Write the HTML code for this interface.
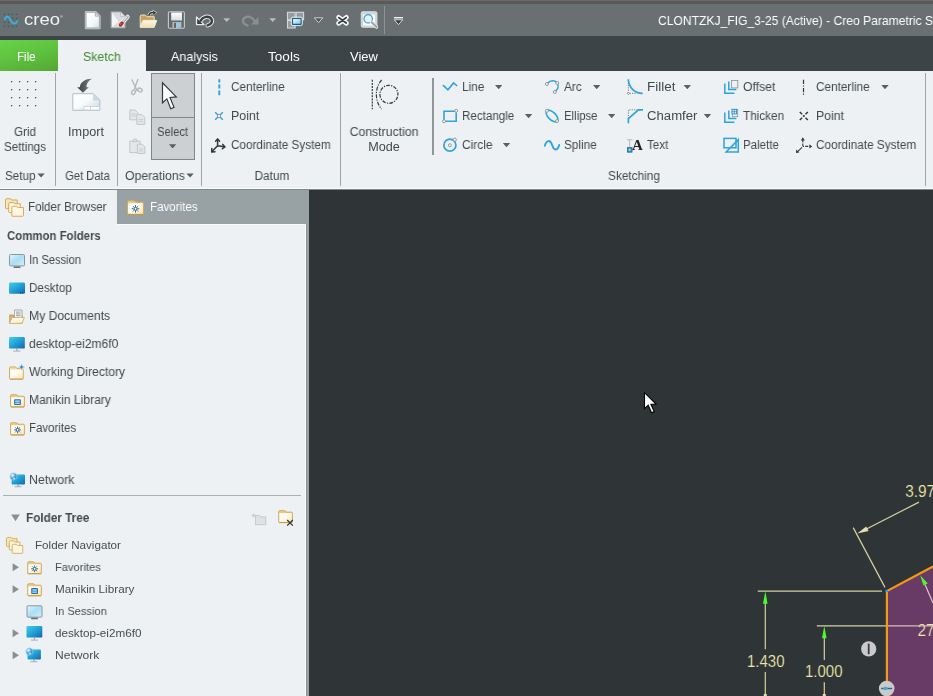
<!DOCTYPE html>
<html>
<head>
<meta charset="utf-8">
<title>Creo Parametric</title>
<style>
html,body{margin:0;padding:0;}
body{width:933px;height:696px;overflow:hidden;position:relative;background:#2f3637;font-family:"Liberation Sans",sans-serif;font-size:12px;color:#43494c;}
.abs{position:absolute;}
.t{position:absolute;white-space:nowrap;line-height:16px;height:16px;font-size:12.5px;transform:scaleX(.93);transform-origin:0 50%;will-change:transform;}
#topstrip{left:0;top:0;width:933px;height:4px;background:#5a5a5a;}
#topline{left:0;top:0;width:933px;height:1px;background:#6d6a69;}
#titlebar{left:0;top:4px;width:933px;height:32px;background:#687072;}
#tabbar{left:0;top:36px;width:933px;height:35px;background:#3c4447;}
#filetab{left:0;top:40px;width:58px;height:31px;background:linear-gradient(165deg,#68d248 0%,#5fc340 45%,#53a833 100%);}
#sketchtab{left:58px;top:40px;width:88px;height:31px;background:#edf1f3;}
#ribbon{left:0;top:71px;width:933px;height:117px;background:#edf1f3;}
#ribbonline{left:0;top:188px;width:933px;height:2px;background:linear-gradient(#f8f9fa 0,#f8f9fa 50%,#7f8789 50%,#7f8789 100%);}
#leftpanel{left:0;top:190px;width:306px;height:506px;background:#edf1f3;}
#favtab{left:117px;top:190px;width:192px;height:34px;background:#98a1a3;}
#divider{left:306px;top:224px;width:3px;height:472px;background:#98a1a3;}
#canvas{left:309px;top:190px;width:624px;height:506px;background:#2f3536;}
.tab{font-size:12.900px;color:#fff;top:48.700px;}
.vsep{position:absolute;width:1px;background:#9fa6a8;}
.rl{top:79px;}
.r2{top:108px;}
.r3{top:137px;}
.gl{top:168px;}
.c{text-align:center;transform-origin:50% 50%;}
.dd{position:absolute;width:7.400px;height:4.200px;background:#5a5f61;clip-path:polygon(0 0,100% 0,50% 100%);}
.item{left:29px;}
.tree{left:55px;font-size:11.600px;color:#474d50;margin-top:.3px;}
.hline{position:absolute;height:1px;background:#a9b0b2;}
</style>
</head>
<body>
<div id="topstrip" class="abs"></div>
<div id="topline" class="abs"></div>
<div id="titlebar" class="abs"></div>
<div id="tabbar" class="abs"></div>
<div id="filetab" class="abs"></div>
<div id="sketchtab" class="abs"></div>
<div id="ribbon" class="abs"></div>
<div id="ribbonline" class="abs"></div>
<div id="leftpanel" class="abs"></div>
<div id="favtab" class="abs"></div>
<div id="divider" class="abs"></div>
<div class="abs" style="left:117px;top:224px;width:189px;height:1px;background:#f9fbfb;"></div>
<div class="abs" style="left:305px;top:224px;width:1px;height:472px;background:#f6f8f9;"></div>
<div class="abs" style="left:306px;top:224px;width:1px;height:472px;background:#8e9799;"></div>
<div id="canvas" class="abs"></div>



<!-- canvas drawing -->
<svg class="abs" style="left:309px;top:190px;" width="624" height="506" viewBox="309 190 624 506">
<!-- polygon fill -->
<path d="M886.900 591.100 L933 566.400 L933 696 L886.900 696 Z" fill="#683a66"/>
<!-- witness/dimension lines -->
<g stroke="#d6d0a0" stroke-width="1.200" fill="none">
<path d="M757.700 591.200 H882"/>
<path d="M765.300 603 V649.300 M765.300 672 V696"/>
<path d="M816.800 625.800 H887"/>
<path d="M824.300 637 V660 M824.300 682.300 V696"/>
<path d="M853.200 527.600 L885 587.400"/>
<path d="M919 502.100 L866 529.200"/>
</g>
<path d="M887 625.800 H933" stroke="#d9b9c0" stroke-width="1.200"/>
<path d="M925 584.500 L933 603" stroke="#e0c8c0" stroke-width="1.200"/>
<!-- pale arrowhead -->
<path d="M857.300 533.600 L866.200 526.400 L868.600 531 Z" fill="#e6e0b0"/>
<!-- bottom arrow tips -->
<rect x="763.800" y="694" width="3" height="2" fill="#e6e0b0"/>
<rect x="822.800" y="694" width="3" height="2" fill="#e6e0b0"/>
<!-- green arrowheads -->
<path d="M765.300 591.200 l2.300 12.600 h-4.600z" fill="#4dfa2c"/>
<path d="M824.300 625.800 l2.300 12.400 h-4.600z" fill="#4dfa2c"/>
<path d="M920.200 575.300 L927.800 583.400 L923.400 585.600 Z" fill="#4dfa2c"/>
<!-- orange edges -->
<path d="M886.900 682 V591.100 L933 566.400" fill="none" stroke="#f39a16" stroke-width="2.200" stroke-linejoin="miter"/>
<rect x="885.600" y="589.800" width="2.400" height="2.400" fill="#19a5ff"/>
<!-- constraint badges -->
<circle cx="868.700" cy="648.900" r="7.600" fill="#c9cacb"/>
<rect x="867.800" y="643.600" width="1.800" height="10.600" fill="#3a3f41"/>
<circle cx="886.700" cy="688.500" r="7.800" fill="#c9cacb"/>
<path d="M881.200 688.500 h11" stroke="#55595b" stroke-width="1.400"/>
<ellipse cx="885.600" cy="688.500" rx="2.200" ry="1.700" fill="#3aa9e8"/>
<!-- dimension text -->
<g font-family="'Liberation Sans',sans-serif" font-size="16.500" fill="#efeaac" stroke="#2f3637" stroke-width=".2">
<text x="747" y="666.800" textLength="37.500" lengthAdjust="spacingAndGlyphs">1.430</text>
<text x="805" y="677" textLength="37.500" lengthAdjust="spacingAndGlyphs">1.000</text>
<text x="905.200" y="497" textLength="38.500" lengthAdjust="spacingAndGlyphs">3.972</text>
</g>
<text x="917.500" y="636" font-family="'Liberation Sans',sans-serif" font-size="16.500" fill="#efe6ae" stroke="#683a66" stroke-width=".22" textLength="38.500" lengthAdjust="spacingAndGlyphs">27.00</text>
<!-- mouse cursor -->
<path d="M644.500 392.700 L644.500 408.600 L648.200 405.200 L651.600 412.700 L654.200 411.600 L650.900 404.300 L656 404.100 Z" fill="#fff" stroke="#000" stroke-width="1.100" stroke-linejoin="miter"/>
</svg>

<!-- title bar icons -->
<svg class="abs" style="left:0;top:0;" width="933" height="36" viewBox="0 0 933 36">
<defs>
<linearGradient id="gpage" x1="0" y1="0" x2="1" y2="1"><stop offset="0" stop-color="#ffffff"/><stop offset="0.6" stop-color="#f4f8fa"/><stop offset="1" stop-color="#cfe2ec"/></linearGradient>
<linearGradient id="gfold" x1="0" y1="0" x2="0" y2="1"><stop offset="0" stop-color="#fffaf0"/><stop offset="1" stop-color="#f3dca6"/></linearGradient>
<linearGradient id="gsave" x1="0" y1="0" x2="0" y2="1"><stop offset="0" stop-color="#ffffff"/><stop offset="1" stop-color="#d9dddf"/></linearGradient>
<linearGradient id="gblue" x1="0" y1="0" x2="1" y2="1"><stop offset="0" stop-color="#f4fbfe"/><stop offset="1" stop-color="#7cc4e6"/></linearGradient>
</defs>
<!-- creo wave -->
<g fill="#495052"><rect x="3.9" y="13.8" width="1.200" height="1.200"/><rect x="7.9" y="13.8" width="1.200" height="1.200"/><rect x="11.9" y="13.8" width="1.200" height="1.200"/><rect x="15.9" y="13.8" width="1.200" height="1.200"/><rect x="3.9" y="17.799999999999997" width="1.200" height="1.200"/><rect x="7.9" y="17.799999999999997" width="1.200" height="1.200"/><rect x="11.9" y="17.799999999999997" width="1.200" height="1.200"/><rect x="15.9" y="17.799999999999997" width="1.200" height="1.200"/><rect x="3.9" y="21.799999999999997" width="1.200" height="1.200"/><rect x="7.9" y="21.799999999999997" width="1.200" height="1.200"/><rect x="11.9" y="21.799999999999997" width="1.200" height="1.200"/><rect x="15.9" y="21.799999999999997" width="1.200" height="1.200"/><rect x="3.9" y="25.799999999999997" width="1.200" height="1.200"/><rect x="7.9" y="25.799999999999997" width="1.200" height="1.200"/><rect x="11.9" y="25.799999999999997" width="1.200" height="1.200"/><rect x="15.9" y="25.799999999999997" width="1.200" height="1.200"/></g>
<path d="M4.800 19.400 C5.800 16 8.400 15.600 10.600 20.200 C12.600 24.400 15.600 24.600 17.300 21.400" fill="none" stroke="#3aaee6" stroke-width="2" stroke-linecap="round"/>
<!-- new doc -->
<path d="M86 12.200 h9.400 l4 4 v11.800 h-13.400z" fill="url(#gpage)" stroke="#c9cdcf" stroke-width="2.400" stroke-linejoin="round"/>
<path d="M86 12.200 h9.400 l4 4 v11.800 h-13.400z" fill="url(#gpage)" stroke="#9fa5a7" stroke-width="1" stroke-linejoin="round"/>
<path d="M95.400 12.200 v4 h4z" fill="#d5e6ee" stroke="#9fa5a7" stroke-width=".8" stroke-linejoin="round"/>
<!-- erase doc -->
<path d="M111.300 12 h9.200 l4.400 4.400 v11.200 h-13.600z" fill="#d9dcde" stroke="#b1b6b8" stroke-width="1.100" stroke-linejoin="round"/>
<path d="M112 12.800 l6.400 8.800 l-6.400 5.400z" fill="#f4f5f6"/>
<path d="M120.500 12 v4.400 h4.400z" fill="#eceeef" stroke="#b1b6b8" stroke-width=".7"/>
<path d="M120.400 25 l7.200-8.200" stroke="#f4f4f4" stroke-width="4.200" stroke-linecap="round"/>
<path d="M122.800 22.200 l4.600-5.300" stroke="#9b9fa1" stroke-width="2.600" stroke-linecap="round"/>
<path d="M122.800 21.600 l4.200-4.800" stroke="#e9eaea" stroke-width="1.200" stroke-linecap="round"/>
<path d="M120.400 25 l1.600-1.800" stroke="#a8241f" stroke-width="3.400" stroke-linecap="round"/>
<path d="M120.200 24.600 l1-1.100" stroke="#d9574f" stroke-width="1.400" stroke-linecap="round"/>
<!-- open folder -->
<path d="M140.200 16.400 q0-1.400 1.400-1.400 h3.800 l1.500 1.700 h7.300 v10.300 h-14z" fill="#c9a25a" stroke="#efe3c4" stroke-width="1" stroke-linejoin="round"/>
<path d="M143 20.400 h13.800 l-2.600 6.800 h-14z" fill="url(#gfold)" stroke="#f6ecd0" stroke-width="1" stroke-linejoin="round"/>
<path d="M148.800 15.400 c.6-2 2.200-3 4.400-2.900" fill="none" stroke="#dfe2e3" stroke-width="3"/>
<path d="M152.600 9.800 l4.600 2.800 l-4.400 3.200z" fill="#dfe2e3"/>
<path d="M148.800 15.400 c.6-2 2.200-3 4.400-2.900" fill="none" stroke="#33393b" stroke-width="1.600"/>
<path d="M153 10.800 l3.400 2 l-3.200 2.300z" fill="#33393b"/>
<!-- save -->
<rect x="168.400" y="11.800" width="16" height="16.400" rx="1.200" fill="#62696b" stroke="#c5cacc" stroke-width="1.100"/>
<rect x="171.200" y="12.500" width="10.800" height="8" fill="url(#gsave)"/>
<rect x="172.400" y="22" width="9" height="5.800" fill="#b4b9bb"/>
<rect x="174.200" y="22.800" width="5.200" height="5" fill="#8fcaea"/>
<rect x="174.200" y="22.800" width="1.600" height="5" fill="#4a5052"/>
<!-- undo -->
<path d="M200.600 20.600 C203 16.600 208.400 15.400 211 18.400 C213.200 21 211.600 24.400 207.600 25.400" fill="none" stroke="#e6e8e9" stroke-width="4.200" stroke-linecap="round"/>
<path d="M196.500 17 V24.600 H204.100z" fill="#3a4144" stroke="#e6e8e9" stroke-width="1.300" stroke-linejoin="round"/>
<path d="M200.600 20.600 C203 16.600 208.400 15.400 211 18.400 C213.200 21 211.600 24.400 207.600 25.400" fill="none" stroke="#3a4144" stroke-width="2.500" stroke-linecap="round"/>
<path d="M223.300 18.300 h6.800 l-3.400 3.700z" fill="#b9bebf"/>
<!-- redo -->
<path d="M254.400 20.600 C252 16.600 246.600 15.400 244 18.400 C241.800 21 243.400 24.400 247.400 25.400" fill="none" stroke="#899092" stroke-width="2.500" stroke-linecap="round"/>
<path d="M258.500 17 V24.600 H250.900z" fill="#899092"/>
<path d="M269.300 18.300 h6.800 l-3.400 3.700z" fill="#b9bebf"/>
<!-- windows -->
<rect x="287.500" y="12.300" width="7.600" height="7.400" fill="#959c9e" stroke="#d6d9da" stroke-width="1.100"/>
<rect x="296.200" y="12.300" width="7.400" height="7.400" fill="#959c9e" stroke="#d6d9da" stroke-width="1.100"/>
<rect x="287.500" y="20.600" width="7.600" height="7.400" fill="#959c9e" stroke="#d6d9da" stroke-width="1.100"/>
<rect x="292.400" y="18.300" width="8.800" height="6.200" rx="1" fill="url(#gblue)" stroke="#1c5f84" stroke-width="1.300"/>
<rect x="291.300" y="17.200" width="11" height="8.400" rx="1.600" fill="none" stroke="#f2f5f6" stroke-width=".9"/>
<!-- dd outline -->
<path d="M314.300 17.800 h8.600 l-4.300 4.900z" fill="#51585a" stroke="#c9cdce" stroke-width="1"/>
<!-- close x -->
<path d="M338.600 17.400 l7.800 5.800 M346.400 17.400 l-7.800 5.800" stroke="#f4f5f5" stroke-width="4.800" stroke-linecap="round"/>
<path d="M338.800 17.600 l7.400 5.400 M346.200 17.600 l-7.400 5.400" stroke="#33393b" stroke-width="1.700" stroke-linecap="round"/>
<!-- search -->
<rect x="361.300" y="11.800" width="15.600" height="15.400" rx="1.200" fill="#cfd3d5" stroke="#dfe2e3" stroke-width="1"/>
<rect x="363" y="14.400" width="12.200" height="11.200" fill="#f9fafa"/>
<circle cx="368.200" cy="18.800" r="4.200" fill="#e4f4fc" stroke="#3b9bd3" stroke-width="1.200"/>
<path d="M371.800 22.400 l4.800 4.600" stroke="#f0f0f0" stroke-width="3.400" stroke-linecap="round"/>
<path d="M371.800 22.400 l4.800 4.600" stroke="#9aa1a3" stroke-width="2" stroke-linecap="round"/>
<!-- separator -->
<rect x="384" y="6" width="1" height="28" fill="#8c9496"/>
<!-- customise dd -->
<rect x="394" y="17" width="9" height="1.400" fill="#f2f3f3"/>
<path d="M394.300 19.800 h8.400 l-4.200 4.800z" fill="#33393b" stroke="#e9ebeb" stroke-width=".9"/>
</svg>

<!-- title bar text -->
<div class="t" style="left:23.600px;top:7.400px;font-size:16.500px;color:#f1f3f3;line-height:20px;height:20px;transform:scaleX(1.120);">creo<span style="font-size:3.500px;vertical-align:7px;">®</span></div>
<div class="t" style="left:658px;top:12.500px;font-size:13.500px;color:#fff;transform:scaleX(.8966);">CLONTZKJ_FIG_3-25 (Active) - Creo Parametric Student Edition</div>

<!-- tabs -->
<div class="t tab" style="left:17.300px;transform:scaleX(0.895);">File</div>
<div class="t tab" style="left:82.500px;color:#3f8a2c;transform:scaleX(0.959);">Sketch</div>
<div class="t tab" style="left:171px;transform:scaleX(0.975);">Analysis</div>
<div class="t tab" style="left:268px;transform:scaleX(1.053);">Tools</div>
<div class="t tab" style="left:350px;transform:scaleX(1.007);">View</div>

<!-- ribbon separators -->
<div class="vsep" style="left:55px;top:73px;height:113px;"></div>
<div class="vsep" style="left:117px;top:73px;height:113px;"></div>
<div class="vsep" style="left:201px;top:73px;height:113px;"></div>
<div class="vsep" style="left:340px;top:73px;height:113px;"></div>
<div class="vsep" style="left:432px;top:78px;height:77px;width:2px;background:#8f9799;"></div>
<div class="vsep" style="left:925px;top:73px;height:113px;"></div>


<div class="abs" style="left:151px;top:73px;width:44px;height:87px;background:#cdd0d2;border:1px solid #7f8789;box-sizing:border-box;"></div>
<div class="abs" style="left:152px;top:117px;width:42px;height:1px;background:#7f8789;"></div>
<!-- ribbon icons -->
<svg class="abs" style="left:0;top:71px;" width="933" height="119" viewBox="0 71 933 119">
<defs>
<linearGradient id="gimp" x1="0" y1="0" x2="1" y2="1"><stop offset="0" stop-color="#ffffff"/><stop offset="0.5" stop-color="#f8fafb"/><stop offset="1" stop-color="#b9d6e4"/></linearGradient>
<linearGradient id="garr" x1="0" y1="0" x2="1" y2="0"><stop offset="0" stop-color="#3a3f41"/><stop offset="1" stop-color="#7a8082"/></linearGradient>
</defs>
<!-- grid dots -->
<g fill="#4a4f52">
<rect x="11" y="81" width="1.300" height="1.300"/><rect x="19" y="81" width="1.300" height="1.300"/><rect x="27" y="81" width="1.300" height="1.300"/><rect x="35" y="81" width="1.300" height="1.300"/>
<rect x="11" y="89" width="1.300" height="1.300"/><rect x="19" y="89" width="1.300" height="1.300"/><rect x="27" y="89" width="1.300" height="1.300"/><rect x="35" y="89" width="1.300" height="1.300"/>
<rect x="11" y="97" width="1.300" height="1.300"/><rect x="19" y="97" width="1.300" height="1.300"/><rect x="27" y="97" width="1.300" height="1.300"/><rect x="35" y="97" width="1.300" height="1.300"/>
<rect x="11" y="105" width="1.300" height="1.300"/><rect x="19" y="105" width="1.300" height="1.300"/><rect x="27" y="105" width="1.300" height="1.300"/><rect x="35" y="105" width="1.300" height="1.300"/>
</g>
<!-- import -->
<path d="M72.800 93.700 h20.600 l6.400 6.400 v10.200 h-27z" fill="url(#gimp)" stroke="#b7bdbf" stroke-width="1"/>
<path d="M93.400 93.700 v6.400 h6.400z" fill="#c5dbe6" stroke="#c9ced0" stroke-width=".6"/>
<rect x="84" y="106.400" width="6.600" height="3.600" fill="#fff" stroke="#c9ced0" stroke-width=".8"/>
<rect x="90.600" y="106.400" width="8.800" height="3.600" fill="#fff" stroke="#c9ced0" stroke-width=".8"/>
<path d="M92 78.700 C86 78.500 80.500 81.500 79.800 87.200 L77.200 87.200 L82.900 92.800 L88.800 87.200 L86.400 87.200 C86.400 83.500 88.500 80.500 92 78.700 Z" fill="url(#garr)"/>
<!-- scissors -->
<g fill="none" stroke="#b4b8ba" stroke-width="1.400" stroke-linecap="round">
<path d="M132 80 l5 10.500 M137.800 79.500 l-3.200 9"/>
<ellipse cx="133.500" cy="92.300" rx="1.700" ry="2.300" transform="rotate(25 133.500 92.300)"/>
<ellipse cx="140" cy="90" rx="2.300" ry="1.700" transform="rotate(25 140 90)"/>
</g>
<!-- copy -->
<g fill="#e4e7e8" stroke="#c3c7c9" stroke-width="1">
<path d="M129.800 110 h5.200 l2.800 2.800 v7 h-8z"/>
<path d="M136.800 114.600 h5.200 l2.800 2.800 v7 h-8z"/>
</g>
<g stroke="#c3c7c9" stroke-width=".8"><path d="M131.200 114 h4.600 M131.200 116 h4.600 M138.400 119.400 h4.800 M138.400 121.400 h4.800"/></g>
<!-- paste -->
<g fill="#e4e7e8" stroke="#c3c7c9" stroke-width="1">
<path d="M129.800 141 h10.400 v11.600 h-10.400z"/>
<path d="M133 141.600 l1-2.600 h2.200 l1 2.600z"/>
<path d="M137.400 144.200 h4.800 l2.600 2.600 v6.600 h-7.400z"/>
</g>
<g stroke="#c3c7c9" stroke-width=".8"><path d="M139 148.800 h4.200 M139 150.800 h4.200"/></g>
<!-- select arrow -->
<path d="M162.500 82.800 L162.500 102.800 L166.900 98.900 L170.700 108.800 L174 107.400 L170 97.500 L176.300 96.900 Z" fill="#fff" stroke="#33393b" stroke-width="1.200" stroke-linejoin="miter"/>
<!-- datum centerline -->
<path d="M219.300 79.200 v16" stroke="#2ea3dc" stroke-width="1.900" stroke-dasharray="3.400 1.800 4.200 1.800 4.800 0"/>
<!-- datum point -->
<path d="M215.200 112.200 l7.600 7.600 M222.800 112.200 l-7.600 7.600" stroke="#2ea3dc" stroke-width="1.500"/>
<circle cx="219" cy="116" r="1.700" fill="#eef1f2" stroke="#8a9092" stroke-width=".9"/>
<!-- datum csys -->
<g fill="none" stroke="#33393b" stroke-width="1.500" stroke-linejoin="round" stroke-linecap="round">
<path d="M217.600 139.200 v6.600 l6.800 1 M217.600 145.800 l-5.600 5.800"/>
<path d="M215.600 141.200 l2-2.200 l2 2.200 M222.800 144.400 l2.200 2.500 l-2.600 1.800 M211.800 148.600 l-.1 3.300 l3.300-.1"/>
</g>
<!-- construction mode -->
<g fill="none" stroke="#33393b" stroke-width="1.200">
<path d="M372.300 79.800 v29.400" stroke-dasharray="2 1.100"/>
<path d="M381.600 80 c-7 8-7 21 0 29" stroke-dasharray="4 1.300 1.100 1.300"/>
<circle cx="388.900" cy="94.300" r="9" stroke-dasharray="1.200 1.300 3.600 1.300"/>
</g>
<!-- line -->
<path d="M443 85.200 l4.900 4.600 l5.700-6.800 l3.600 3" fill="none" stroke="#2ea3dc" stroke-width="1.600"/>
<!-- rectangle -->
<path d="M454.800 111.200 h-10.800 v8.600 M445.800 121.200 h10.400 v-8.800" fill="none" stroke="#2ea3dc" stroke-width="1.600"/>
<circle cx="456.200" cy="110.800" r="1.500" fill="#f4f6f6" stroke="#8a9092" stroke-width=".9"/>
<circle cx="444" cy="121.200" r="1.500" fill="#f4f6f6" stroke="#8a9092" stroke-width=".9"/>
<!-- circle -->
<circle cx="449.900" cy="145.200" r="6" fill="none" stroke="#2ea3dc" stroke-width="1.700"/>
<circle cx="449.900" cy="145.200" r="1.500" fill="#f4f6f6" stroke="#8a9092" stroke-width=".9"/>
<circle cx="454.800" cy="139.700" r="1.600" fill="#f4f6f6" stroke="#8a9092" stroke-width=".9"/>
<!-- arc -->
<path d="M547.600 83.200 c3-3.400 7.800-3 9.800.2 c1.600 2.800.4 6.200-2.400 8.200" fill="none" stroke="#2ea3dc" stroke-width="1.600"/>
<circle cx="546.900" cy="84" r="1.500" fill="#f4f6f6" stroke="#8a9092" stroke-width=".9"/>
<circle cx="557.300" cy="83" r="1.500" fill="#f4f6f6" stroke="#8a9092" stroke-width=".9"/>
<circle cx="554.800" cy="92" r="1.500" fill="#f4f6f6" stroke="#8a9092" stroke-width=".9"/>
<!-- ellipse -->
<ellipse cx="552" cy="116" rx="7.400" ry="3.800" transform="rotate(45 552 116)" fill="none" stroke="#2ea3dc" stroke-width="1.600"/>
<circle cx="546.900" cy="110.800" r="1.500" fill="#f4f6f6" stroke="#8a9092" stroke-width=".9"/>
<circle cx="557.100" cy="121" r="1.500" fill="#f4f6f6" stroke="#8a9092" stroke-width=".9"/>
<!-- spline -->
<path d="M544.800 145.800 c1.600-6 5.600-6.400 7.400-.6 c2 6 5.600 5.400 7-.2" fill="none" stroke="#2ea3dc" stroke-width="1.900" stroke-linecap="round"/>
<!-- fillet -->
<path d="M628.400 82.500 v10.800 h8" fill="none" stroke="#6d7476" stroke-width=".9" stroke-dasharray="1.200 1.200"/>
<path d="M628.400 79.300 A14 14 0 0 0 642.700 93.300" fill="none" stroke="#2ea3dc" stroke-width="1.700"/>
<path d="M628.400 92 l1.300 1.300 l-1.300 1.300 l-1.300-1.300z" fill="#eef1f2" stroke="#6d7476" stroke-width=".7"/>
<!-- chamfer -->
<path d="M628.400 118.500 v-8.700 h9" fill="none" stroke="#6d7476" stroke-width=".9" stroke-dasharray="1.200 1.200"/>
<path d="M628.400 123.200 v-4.600 l10-8.800 h4.600" fill="none" stroke="#2ea3dc" stroke-width="1.700"/>
<!-- text icon -->
<path d="M627 139.800 h5.400 M629.700 139.800 v9.400" stroke="#b4b8ba" stroke-width="1"/>
<rect x="627.300" y="147.600" width="4.800" height="4.600" fill="#2a8cc4" stroke="#1c5f84" stroke-width=".6"/>
<path d="M628.300 149.900 h2.800 M629.700 148.600 v2.600" stroke="#dff1fa" stroke-width=".7"/>
<!-- offset -->
<rect x="731.400" y="80.500" width="6.400" height="7.400" fill="none" stroke="#8a9092" stroke-width=".8"/>
<path d="M724.800 83.600 v9.600 h9.600 M728.800 81.600 v7.800 h7.600" fill="none" stroke="#2ea3dc" stroke-width="1.500"/>
<!-- thicken -->
<rect x="732.300" y="109.500" width="5.400" height="7.200" fill="none" stroke="#8a9092" stroke-width=".8"/>
<path d="M724.800 112.600 v9.600 h9.600 M728.800 110.600 v7.800 h7.600" fill="none" stroke="#2ea3dc" stroke-width="1.500"/>
<rect x="732" y="109.300" width="4.600" height="4.600" fill="#dff1fa" stroke="#2a8cc4" stroke-width=".9"/>
<path d="M734.300 109.300 v4.600 M732 111.600 h4.600" stroke="#2a8cc4" stroke-width=".7"/>
<!-- palette -->
<rect x="724" y="138.400" width="12" height="9.400" fill="none" stroke="#2ea3dc" stroke-width="1.500"/>
<path d="M738.300 139.600 v12.400 h-12.200z" fill="none" stroke="#2ea3dc" stroke-width="1.500" stroke-linejoin="miter"/>
<!-- sketch centerline -->
<path d="M803.500 79.800 v15.600" stroke="#33393b" stroke-width="1.200" stroke-dasharray="4.200 1.400 1.200 1.400"/>
<!-- sketch point -->
<path d="M799.800 112 l2.300 2.300 M807.800 112 l-2.300 2.300 M799.800 120 l2.300-2.300 M807.800 120 l-2.300-2.300" stroke="#33393b" stroke-width="1.500"/>
<rect x="802.900" y="115.100" width="1.800" height="1.800" fill="#33393b"/>
<!-- sketch csys -->
<g fill="none" stroke="#33393b" stroke-width="1.100">
<path d="M802.800 140 v6.400" stroke-dasharray="2.400 1.200"/>
<path d="M802.800 146.400 h7" stroke-dasharray="1.200 1.200 3 1.200"/>
<path d="M802 147.400 l-4.600 4.400"/>
</g>
<path d="M800.800 140.400 l2-3.200 l2 3.200z M809.400 144.300 l2.800 2.100 l-2.800 2.100z M796.200 149.600 l-.2 3.400 l3.400-.4" fill="#33393b"/>
</svg>

<!-- ribbon text -->
<div class="t c" style="left:0;width:50px;top:124px;transform:scaleX(0.940);">Grid</div>
<div class="t c" style="left:0;width:50px;top:139px;transform:scaleX(0.934);">Settings</div>
<div class="t" style="left:5px;top:168px;transform:scaleX(0.934);">Setup</div>
<div class="dd" style="left:37.400px;top:173.400px;"></div>
<div class="t c" style="left:61px;width:50px;top:124px;transform:scaleX(1.010);">Import</div>
<div class="t c" style="left:57px;width:61px;top:168px;transform:scaleX(0.895);">Get Data</div>
<div class="t c" style="left:152px;width:41px;top:124px;transform:scaleX(0.889);">Select</div>
<div class="dd" style="left:168.900px;top:144.200px;"></div>
<div class="t" style="left:125px;top:168px;transform:scaleX(0.976);">Operations</div>
<div class="dd" style="left:186.400px;top:173.400px;"></div>

<div class="t rl" style="left:231px;transform:scaleX(0.944);">Centerline</div>
<div class="t r2" style="left:231px;transform:scaleX(0.993);">Point</div>
<div class="t r3" style="left:231px;transform:scaleX(0.937);">Coordinate System</div>
<div class="t c gl" style="left:232px;width:80px;transform:scaleX(0.942);">Datum</div>

<div class="t c" style="left:344px;width:80px;top:124px;transform:scaleX(0.980);">Construction</div>
<div class="t c" style="left:344px;width:80px;top:139px;transform:scaleX(1.010);">Mode</div>

<div class="t rl" style="left:462px;transform:scaleX(0.943);">Line</div><div class="dd" style="left:495px;top:85px;"></div>
<div class="t r2" style="left:462px;transform:scaleX(0.929);">Rectangle</div><div class="dd" style="left:524.900px;top:114px;"></div>
<div class="t r3" style="left:462px;transform:scaleX(0.955);">Circle</div><div class="dd" style="left:502.800px;top:143px;"></div>

<div class="t rl" style="left:564px;transform:scaleX(0.949);">Arc</div><div class="dd" style="left:593px;top:85px;"></div>
<div class="t r2" style="left:564px;transform:scaleX(0.910);">Ellipse</div><div class="dd" style="left:608px;top:114px;"></div>
<div class="t r3" style="left:564px;transform:scaleX(0.944);">Spline</div>

<div class="t rl" style="left:647px;transform:scaleX(1.076);">Fillet</div><div class="dd" style="left:683.600px;top:85px;"></div>
<div class="t r2" style="left:647px;transform:scaleX(1.053);">Chamfer</div><div class="dd" style="left:703.800px;top:114px;"></div>
<div class="t r3" style="left:631.500px;font-family:'Liberation Serif',serif;font-weight:bold;font-size:15px;color:#222;transform:none;">A</div><div class="t r3" style="left:647px;transform:scaleX(0.929);">Text</div>

<div class="t rl" style="left:743px;transform:scaleX(0.975);">Offset</div>
<div class="t r2" style="left:743px;transform:scaleX(0.941);">Thicken</div>
<div class="t r3" style="left:743px;transform:scaleX(0.922);">Palette</div>

<div class="t rl" style="left:816px;transform:scaleX(0.942);">Centerline</div><div class="dd" style="left:881.300px;top:85px;"></div>
<div class="t r2" style="left:816px;transform:scaleX(0.982);">Point</div>
<div class="t r3" style="left:816px;transform:scaleX(0.942);">Coordinate System</div>
<div class="t c gl" style="left:594px;width:80px;transform:scaleX(0.945);">Sketching</div>


<!-- left panel icons -->
<svg class="abs" style="left:0;top:190px;" width="309" height="506" viewBox="0 190 309 506">
<defs>
<linearGradient id="gfl" x1="0" y1="0" x2="1" y2="1"><stop offset="0" stop-color="#ffffff"/><stop offset=".45" stop-color="#fffaf0"/><stop offset="1" stop-color="#fbe3b4"/></linearGradient>
<linearGradient id="gmonl" x1="0" y1="0" x2="1" y2="1"><stop offset="0" stop-color="#e4f6fd"/><stop offset=".5" stop-color="#a8def5"/><stop offset="1" stop-color="#d4effa"/></linearGradient>
<linearGradient id="gmonb" x1="0" y1="0" x2="1" y2="1"><stop offset="0" stop-color="#3fd0ea"/><stop offset=".5" stop-color="#22a0d6"/><stop offset="1" stop-color="#1463ae"/></linearGradient>
<radialGradient id="gglobe" cx=".35" cy=".35" r=".8"><stop offset="0" stop-color="#bfe8fa"/><stop offset=".6" stop-color="#3f9fd8"/><stop offset="1" stop-color="#1b5fa8"/></radialGradient>
</defs>
<g transform="translate(5 198.2) scale(1.05)"><g transform="translate(0 0)"><path d="M.5 1.800 q0-1.300 1.300-1.300 h3 q1 0 1.400 1.200 h5.400 v7.600 q0 .7-.7.7 h-9.700 q-.7 0-.7-.7z" fill="#f6e6bd" stroke="#d3a750" stroke-width=".9"/></g><g transform="translate(3 3.6)"><path d="M.5 1.800 q0-1.300 1.300-1.300 h3 q1 0 1.400 1.200 h5.400 v7.600 q0 .7-.7.7 h-9.700 q-.7 0-.7-.7z" fill="#fdf6e3" stroke="#d3a750" stroke-width=".9"/></g><g transform="translate(6 7.2)"><path d="M.5 1.800 q0-1.300 1.300-1.300 h3 q1 0 1.400 1.200 h5.400 v7.600 q0 .7-.7.7 h-9.700 q-.7 0-.7-.7z" fill="#fdf6e3" stroke="#d3a750" stroke-width=".9"/></g></g>
<g transform="translate(127 200.2)"><path d="M.5 13.6 V1.8 Q.5 .5 1.8 .5 H7.24 Q8.44 .5 8.84 2 H15.4 Q16.5 2 16.5 3.2 V13.6 Q16.5 14.3 15.7 14.3 H1.3 Q.5 14.3 .5 13.6Z" fill="#e9c98a" stroke="#d2a956" stroke-width=".9"/><rect x="1.2" y="3" width="14.6" height="10.6" rx=".5" fill="url(#gfl)"/><path d="M1 14.2 H16" stroke="#c2963f" stroke-width=".8"/><path d="M10.4 8.6 L12.3 8.6 M9.84 9.94 L11.19 11.29 M8.5 10.5 L8.5 12.4 M7.16 9.94 L5.81 11.29 M6.6 8.6 L4.7 8.6 M7.16 7.26 L5.81 5.91 M8.5 6.7 L8.5 4.8 M9.84 7.26 L11.19 5.91 " stroke="#1a5a8a" stroke-width=".9"/><circle cx="8.5" cy="8.6" r="1.5" fill="#fff" stroke="#1a5a8a" stroke-width="1"/></g>
<g transform="translate(9 254)"><rect x=".5" y=".5" width="15" height="11.4" rx="1" fill="url(#gmonl)" stroke="#8f9698" stroke-width="1"/><rect x="4.6" y="12.4" width="6.8" height="1.6" fill="#6d7476"/></g>
<rect x="9" y="282.600" width="16" height="11.200" rx="1.400" fill="url(#gmonb)"/><rect x="20" y="292.400" width="1" height="1" fill="#0d3f78"/><rect x="22" y="292.400" width="1" height="1" fill="#0d3f78"/>
<!-- my documents -->
<g transform="translate(9 309.500)"><path d="M.6 5.400 h4 l1.200 1.200 h7.600 v7 h-12.800z" fill="#dcae5a" stroke="#c99a44" stroke-width=".7"/><path d="M5.600 .5 h7.400 v9 h-7.400z" fill="#fafbfb" stroke="#8f9698" stroke-width=".8"/><path d="M7 2.600 h4.600 M7 4.400 h4.600 M7 6.200 h4.600" stroke="#6d7476" stroke-width=".7"/><path d="M3 8 h12.400 l-2.400 5.800 h-12.400z" fill="url(#gfl)" stroke="#d3a750" stroke-width=".8" stroke-linejoin="round"/></g>
<g transform="translate(9 337)"><rect x="0" y="0" width="15.8" height="11.6" rx="1.2" fill="url(#gmonb)"/><rect x="7.2" y="11.6" width="1.4" height="2" fill="#8fa2ad"/><rect x="4.4" y="13.6" width="7" height="1" fill="#9fb0ba"/></g>
<!-- working dir -->
<g transform="translate(9 366.4)"><path d="M.5 12.1 V1.8 Q.5 .5 1.8 .5 H6.1 Q7.3 .5 7.7 2 H13.2 Q14.3 2 14.3 3.2 V12.1 Q14.3 12.8 13.5 12.8 H1.3 Q.5 12.8 .5 12.1Z" fill="#f0dcae" stroke="#d2a956" stroke-width=".9"/><rect x="1.2" y="3" width="12.4" height="9.1" rx=".5" fill="url(#gfl)"/><path d="M1 12.7 H13.8" stroke="#c2963f" stroke-width=".8"/></g>
<path d="M21.600 363.600 l.9 2.500 l2.500 .9 l-2.500 .9 l-.9 2.500 l-.9-2.500 l-2.500-.9 l2.500-.9z" fill="#2a8cc4" stroke="#eef3f5" stroke-width=".5"/>
<g transform="translate(10 394.2)"><path d="M.5 12.1 V1.8 Q.5 .5 1.8 .5 H6.2 Q7.4 .5 7.8 2 H13.4 Q14.5 2 14.5 3.2 V12.1 Q14.5 12.8 13.7 12.8 H1.3 Q.5 12.8 .5 12.1Z" fill="#e9c98a" stroke="#d2a956" stroke-width=".9"/><rect x="1.2" y="3" width="12.6" height="9.1" rx=".5" fill="url(#gfl)"/><path d="M1 12.7 H14" stroke="#c2963f" stroke-width=".8"/><rect x="4.1" y="5" width="6.8" height="5.8" rx=".7" fill="#1878b4"/><path d="M5.2 6.9 h4.6 M5.2 9 h4.6" stroke="#fff" stroke-width="1"/></g>
<g transform="translate(10 422.2)"><path d="M.5 12.1 V1.8 Q.5 .5 1.8 .5 H6.2 Q7.4 .5 7.8 2 H13.4 Q14.5 2 14.5 3.2 V12.1 Q14.5 12.8 13.7 12.8 H1.3 Q.5 12.8 .5 12.1Z" fill="#e9c98a" stroke="#d2a956" stroke-width=".9"/><rect x="1.2" y="3" width="12.6" height="9.1" rx=".5" fill="url(#gfl)"/><path d="M1 12.7 H14" stroke="#c2963f" stroke-width=".8"/><path d="M9.5 7.7 L11 7.7 M8.94 9.04 L10 10.1 M7.6 9.6 L7.6 11.1 M6.26 9.04 L5.2 10.1 M5.7 7.7 L4.2 7.7 M6.26 6.36 L5.2 5.3 M7.6 5.8 L7.6 4.3 M8.94 6.36 L10 5.3 " stroke="#1a5a8a" stroke-width=".9"/><circle cx="7.6" cy="7.7" r="1.5" fill="#fff" stroke="#1a5a8a" stroke-width="1"/></g>
<g transform="translate(9.6 473)"><rect x="2" y="1.6" width="13.4" height="9.8" rx="1" fill="url(#gmonb)"/><rect x="7.8" y="11.4" width="1.4" height="1.8" fill="#8fa2ad"/><rect x="5" y="13.2" width="7" height="1" fill="#9fb0ba"/><circle cx="3.8" cy="3.4" r="3.6" fill="url(#gglobe)" stroke="#d9eef9" stroke-width=".5"/><path d="M1.6 2.2 q1.6-1.400 3-.6 q-.6 1.600-2 1.800z M3.600 5 q1.400-.6 2.200.6 q-.8 1-2 .8z" fill="#e9f6fc" opacity=".9"/></g>
<!-- folder tree header -->
<path d="M11.200 514.400 h8.600 l-4.300 6.800z" fill="#8a8f91"/>
<g transform="translate(253.500 513.500)"><path d="M2 2 h4 l1 1.400 h5.300 v7.800 h-10.300z" fill="#dfe1e2" stroke="#c3c7c9" stroke-width=".9"/><path d="M.2 0 v4 M-1.800 2 h4 M-1.200 .6 l2.800 2.800 M1.600 .6 l-2.800 2.800" stroke="#c3c7c9" stroke-width=".7"/></g>
<g transform="translate(278.2 510.1)"><path d="M.5 11.8 V1.8 Q.5 .5 1.8 .5 H6.1 Q7.3 .5 7.7 2 H13.2 Q14.3 2 14.3 3.2 V11.8 Q14.3 12.5 13.5 12.5 H1.3 Q.5 12.5 .5 11.8Z" fill="#e9c98a" stroke="#d2a956" stroke-width=".9"/><rect x="1.2" y="3" width="12.4" height="8.8" rx=".5" fill="url(#gfl)"/><path d="M1 12.4 H13.8" stroke="#c2963f" stroke-width=".8"/></g>
<path d="M287.200 520 l5.600 5.600 M292.800 520 l-5.600 5.600" stroke="#33393b" stroke-width="1.300"/>
<!-- tree icons -->
<g transform="translate(6 537) scale(0.95)"><g transform="translate(0 0)"><path d="M.5 1.800 q0-1.300 1.300-1.300 h3 q1 0 1.400 1.200 h5.400 v7.600 q0 .7-.7.7 h-9.700 q-.7 0-.7-.7z" fill="#f6e6bd" stroke="#d3a750" stroke-width=".9"/></g><g transform="translate(3 3.6)"><path d="M.5 1.800 q0-1.300 1.300-1.300 h3 q1 0 1.400 1.200 h5.400 v7.600 q0 .7-.7.7 h-9.700 q-.7 0-.7-.7z" fill="#fdf6e3" stroke="#d3a750" stroke-width=".9"/></g><g transform="translate(6 7.2)"><path d="M.5 1.800 q0-1.300 1.300-1.300 h3 q1 0 1.400 1.200 h5.400 v7.600 q0 .7-.7.7 h-9.700 q-.7 0-.7-.7z" fill="#fdf6e3" stroke="#d3a750" stroke-width=".9"/></g></g>
<g fill="#8a8f91"><path d="M12.600 563.200 l6.400 4 l-6.400 4z"/><path d="M12.600 585.200 l6.400 4 l-6.400 4z"/><path d="M12.600 629.200 l6.400 4 l-6.400 4z"/><path d="M12.600 651.200 l6.400 4 l-6.400 4z"/></g>
<g transform="translate(27.2 561.2)"><path d="M.5 11.9 V1.8 Q.5 .5 1.8 .5 H6.04 Q7.24 .5 7.64 2 H13.1 Q14.2 2 14.2 3.2 V11.9 Q14.2 12.6 13.4 12.6 H1.3 Q.5 12.6 .5 11.9Z" fill="#e9c98a" stroke="#d2a956" stroke-width=".9"/><rect x="1.2" y="3" width="12.3" height="8.9" rx=".5" fill="url(#gfl)"/><path d="M1 12.5 H13.7" stroke="#c2963f" stroke-width=".8"/><path d="M9.3 7.6 L10.8 7.6 M8.74 8.94 L9.8 10 M7.4 9.5 L7.4 11 M6.06 8.94 L5 10 M5.5 7.6 L4 7.6 M6.06 6.26 L5 5.2 M7.4 5.7 L7.4 4.2 M8.74 6.26 L9.8 5.2 " stroke="#1a5a8a" stroke-width=".9"/><circle cx="7.4" cy="7.6" r="1.5" fill="#fff" stroke="#1a5a8a" stroke-width="1"/></g>
<g transform="translate(27.2 583.2)"><path d="M.5 11.9 V1.8 Q.5 .5 1.8 .5 H6.04 Q7.24 .5 7.64 2 H13.1 Q14.2 2 14.2 3.2 V11.9 Q14.2 12.6 13.4 12.6 H1.3 Q.5 12.6 .5 11.9Z" fill="#e9c98a" stroke="#d2a956" stroke-width=".9"/><rect x="1.2" y="3" width="12.3" height="8.9" rx=".5" fill="url(#gfl)"/><path d="M1 12.5 H13.7" stroke="#c2963f" stroke-width=".8"/><rect x="4" y="4.9" width="6.8" height="5.8" rx=".7" fill="#1878b4"/><path d="M5.1 6.8 h4.6 M5.1 8.9 h4.6" stroke="#fff" stroke-width="1"/></g>
<g transform="translate(26.5 605.3)"><rect x=".5" y=".5" width="15" height="11.4" rx="1" fill="url(#gmonl)" stroke="#8f9698" stroke-width="1"/><rect x="4.6" y="12.4" width="6.8" height="1.6" fill="#6d7476"/></g>
<g transform="translate(26.5 626)"><rect x="0" y="0" width="15.8" height="11.6" rx="1.2" fill="url(#gmonb)"/><rect x="7.2" y="11.6" width="1.4" height="2" fill="#8fa2ad"/><rect x="4.4" y="13.6" width="7" height="1" fill="#9fb0ba"/></g>
<g transform="translate(25.5 648)"><rect x="2" y="1.6" width="13.4" height="9.8" rx="1" fill="url(#gmonb)"/><rect x="7.8" y="11.4" width="1.4" height="1.8" fill="#8fa2ad"/><rect x="5" y="13.2" width="7" height="1" fill="#9fb0ba"/><circle cx="3.8" cy="3.4" r="3.6" fill="url(#gglobe)" stroke="#d9eef9" stroke-width=".5"/><path d="M1.6 2.2 q1.6-1.400 3-.6 q-.6 1.600-2 1.800z M3.600 5 q1.400-.6 2.200.6 q-.8 1-2 .8z" fill="#e9f6fc" opacity=".9"/></g>
</svg>

<!-- left panel -->
<div class="t" style="left:28px;top:199px;transform:scaleX(0.926);">Folder Browser</div>
<div class="t" style="left:150px;top:199px;color:#fff;transform:scaleX(0.926);">Favorites</div>
<div class="t" style="left:7px;top:228px;font-weight:bold;transform:scaleX(0.912);">Common Folders</div>
<div class="t item" style="top:252px;transform:scaleX(0.889);">In Session</div>
<div class="t item" style="top:280px;transform:scaleX(0.933);">Desktop</div>
<div class="t item" style="top:308px;transform:scaleX(0.973);">My Documents</div>
<div class="t item" style="top:336px;transform:scaleX(0.967);">desktop-ei2m6f0</div>
<div class="t item" style="top:364px;transform:scaleX(0.970);">Working Directory</div>
<div class="t item" style="top:392px;transform:scaleX(0.966);">Manikin Library</div>
<div class="t item" style="top:420px;transform:scaleX(0.916);">Favorites</div>
<div class="t item" style="top:472px;transform:scaleX(0.990);">Network</div>
<div class="hline" style="left:3px;top:495px;width:298px;"></div>
<div class="t" style="left:26px;top:510px;font-weight:bold;transform:scaleX(0.939);">Folder Tree</div>
<div class="t" style="left:35px;top:537.300px;font-size:11.600px;color:#474d50;transform:scaleX(1.003);">Folder Navigator</div>
<div class="t tree" style="top:559px;transform:scaleX(0.960);">Favorites</div>
<div class="t tree" style="top:581px;transform:scaleX(1.010);">Manikin Library</div>
<div class="t tree" style="top:603px;transform:scaleX(0.957);">In Session</div>
<div class="t tree" style="top:625px;transform:scaleX(1.008);">desktop-ei2m6f0</div>
<div class="t tree" style="top:647px;transform:scaleX(1.039);">Network</div>

</body>
</html>
